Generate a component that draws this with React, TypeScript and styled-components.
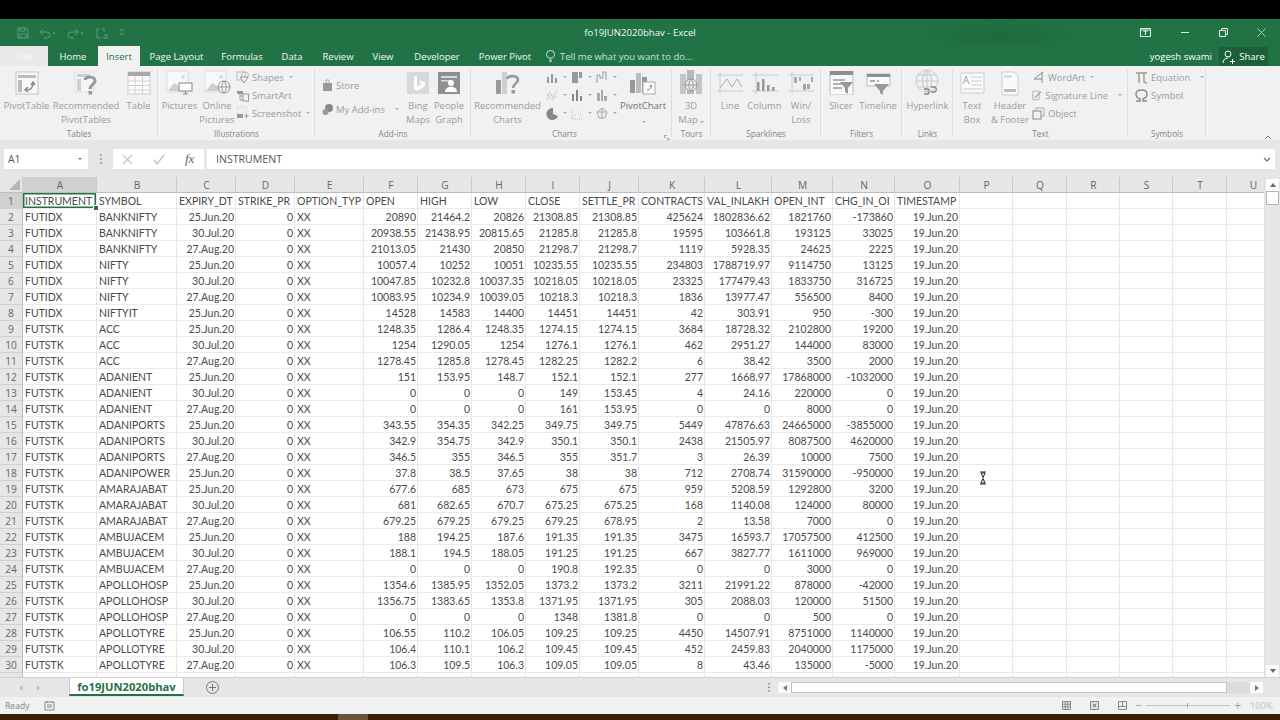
import React from "react";
import styled, { createGlobalStyle } from "styled-components";

const Global = createGlobalStyle`
  html, body { margin: 0; padding: 0; background: #000; }
  * { box-sizing: border-box; }
`;

const UI = `"Open Sans", "Noto Sans", sans-serif`;
const GREEN = "#217346";
const G = "#b9b9b9";
const D = "#9c9c9c";

const Frame = styled.div`
  width: 1280px; height: 720px; display: flex; flex-direction: column; overflow: hidden;
  position: relative; font-family: ${UI}; background: #000;
`;
const Letterbox = styled.div`height: 19px; background: #000; flex: none;`;
const TitleBar = styled.div`
  height: 27px; flex: none; display: grid; grid-template-columns: 1fr auto 1fr; align-items: center;
  background: radial-gradient(ellipse 90px 20px at 1000px 14px, #1d6a3f 0%, transparent 100%), ${GREEN};
  color: #fff; 
`;
const Qat = styled.div`display: flex; align-items: center; padding-left: 17px; gap: 10px;`;
const DocTitle = styled.div`font-size: 9.6px; color: #f2f7f4;`;
const WinControls = styled.div`display: flex; justify-content: flex-end; align-items: center; padding-right: 14px; gap: 29px;`;
const TabBar = styled.div`
  height: 20px; flex: none; display: flex; align-items: stretch; background: ${GREEN};
  font-size: 9.5px; color: #fff;
`;
const FileTab = styled.div`width: 48px; background: #e9e9e9; color: #fafafa; display: flex; align-items: center; justify-content: center;`;
const RibbonTab = styled.div<{ $w: number; $active?: boolean }>`
  width: ${p => p.$w}px; display: flex; align-items: center; justify-content: center; white-space: nowrap;
  background: ${p => (p.$active ? "#f1f1f1" : "transparent")};
  color: ${p => (p.$active ? GREEN : "#f3f8f5")};
`;
const Tell = styled.div`display: flex; align-items: center; gap: 5px; margin-left: 7px; color: #c9e0d3; white-space: nowrap;`;
const Account = styled.div`margin-left: auto; display: flex; align-items: center; padding-right: 12px; gap: 7px; white-space: nowrap;`;
const ShareBox = styled.div`width: 49px; height: 20px; background: #1b6039; display: flex; align-items: center; justify-content: center; gap: 3px; margin-top: 1px;`;

const Ribbon = styled.div`
  height: 74px; flex: none; background: #f1f1f1; display: flex; position: relative; font-size: 9.45px; color: ${D};
`;
const Group = styled.div<{ $w: number }>`
  width: ${p => p.$w}px; flex: none; display: flex; flex-direction: column; padding: 4px 0 0;
  position: relative;
  &::after { content: ""; position: absolute; right: 0; top: 3px; bottom: 3px; width: 1px; background: #dcdcdc; }
`;
const GroupBody = styled.div<{ $pl?: number }>`flex: 1; display: flex; align-items: flex-start; padding-left: ${p => p.$pl || 0}px; min-height: 0;`;
const GroupLabel = styled.div<{ $pr?: number }>`height: 12px; text-align: center; font-size: 8.2px; color: #858585; line-height: 12px; padding-right: ${p => p.$pr || 0}px;`;
const BigBtn = styled.div<{ $w: number; $dark?: boolean }>`
  width: ${p => p.$w}px; flex: none; display: flex; flex-direction: column; align-items: center; text-align: center;
  line-height: 13.5px; white-space: nowrap; color: ${p => (p.$dark ? "#6f6f6f" : D)};
`;
const IconSlot = styled.div`height: 26px; margin-bottom: 3px; display: flex; align-items: center; justify-content: center;`;
const SmallCol = styled.div<{ $w: number }>`
  width: ${p => p.$w}px; flex: none; display: flex; flex-direction: column; gap: 0; margin-top: -2px;
`;
const SmallRow = styled.div<{ $h?: number }>`height: ${p => p.$h || 18}px; display: flex; align-items: center; gap: 3px; white-space: nowrap;`;
const Caret = styled.span`
  display: inline-block; width: 0; height: 0; border-left: 2px solid transparent; border-right: 2px solid transparent;
  border-top: 2px solid #aaa; margin-left: 2px; flex: none;
`;
const ChartGrid = styled.div`
  display: grid; grid-template-columns: repeat(3, 25px); grid-auto-rows: 18px; width: 75px; flex: none; margin: -2px 0 0 5px;
`;
const ChartCell = styled.div`display: flex; align-items: center; gap: 2px;`;
const Collapse = styled.div`position: absolute; right: 6px; bottom: 2px; width: 10px; height: 8px;`;
const Launcher = styled.div`position: absolute; right: 2px; bottom: 3px; width: 6px; height: 6px;`;

const FormulaStrip = styled.div`
  height: 37px; flex: none; background: #e6e6e6; display: flex; align-items: flex-start; padding: 9px 5px 0 4px;
`;
const NameBox = styled.div`
  width: 84px; height: 20px; background: #fff; display: flex; align-items: center; justify-content: space-between;
  padding: 0 5px 0 4px; font: 10.4px ${UI}; color: #555; 
`;
const Dots = styled.div`width: 25px; flex: none; display: flex; justify-content: center; align-items: center; height: 20px;`;
const FxBox = styled.div`
  width: 91px; height: 20px; background: #fff; display: flex; align-items: center; gap: 20px; padding: 0 0 0 9px; flex: none;
`;
const Fx = styled.span`font: italic 13px "Liberation Serif", serif; color: #666;`;
const FormulaInput = styled.div`
  flex: 1; margin-left: 3px; height: 20px; background: #fff; display: flex; align-items: center; justify-content: space-between;
  padding: 0 4px 0 9px; font-size: 10.6px; color: #555;
`;

const SheetArea = styled.div`height: 500px; flex: none; display: flex; background: #fff; position: relative; margin-top: 0;`;
const Grid = styled.div`
  width: 1264px; height: 500px; overflow: hidden; display: grid;
  grid-template-columns: 23px 74px 80px 59px 59px 69px 54px 54px 54px 54px 59px 66px 67px 61px 62px 65px 53px 54px 53px 53px 54px 53px;
  grid-auto-rows: 16px; font-family: "Lato", sans-serif; font-size: 10.5px; color: #4a4a4a;
`;
const Corner = styled.div`background: #e6e6e6; border-right: 1px solid #cfcfcf; border-bottom: 1px solid #bdbdbd; display: flex; align-items: flex-end; justify-content: flex-end; padding: 2px;`;
const ColHead = styled.div<{ $on?: boolean }>`
  background: ${p => (p.$on ? "#d0d0d0" : "#e6e6e6")}; color: #666; border-right: 1px solid #c9c9c9; border-bottom: 1px solid #bdbdbd;
  display: flex; align-items: center; justify-content: center; font: 10.2px ${UI}; padding: 1px 0 0 1px;
`;
const RowHead = styled.div<{ $on?: boolean }>`
  background: ${p => (p.$on ? "#d0d0d0" : "#e6e6e6")}; color: #666; border-right: 1px solid #bdbdbd; border-bottom: 1px solid #d0d0d0;
  display: flex; align-items: center; justify-content: center; font: 10.2px ${UI}; padding-top: 1px;
`;
const Cell = styled.div<{ $right?: boolean; $sel?: boolean }>`
  border-right: 1px solid #e6e6e6; border-bottom: 1px solid #ebebeb; display: flex; align-items: center;
  justify-content: ${p => (p.$right ? "flex-end" : "flex-start")}; padding: 1px 1px 0 2px; white-space: nowrap; overflow: visible; position: relative;
  ${p => p.$sel ? `box-shadow: inset 0 0 0 1.5px ${GREEN}; z-index: 2;` : ""}
`;
const Handle = styled.span`position: absolute; right: -2px; bottom: -2px; width: 4px; height: 4px; background: ${GREEN}; border: 1px solid #fff; box-sizing: content-box; margin: -1px;`;
const VScroll = styled.div`width: 16px; flex: none; background: #e6e6e6; display: flex; flex-direction: column; align-items: center; padding: 2px 0 0; border-left: 1px solid #e0e0e0;`;
const ScrollBtn = styled.div`width: 13px; height: 12px; background: #fdfdfd; display: flex; align-items: center; justify-content: center; flex: none;`;
const VThumb = styled.div`width: 13px; height: 14px; background: #fff; border: 1px solid #b5b5b5; flex: none;`;
const Spring = styled.div`flex: 1;`;
const Cursor = styled.div`position: absolute; left: 979px; top: 291px; width: 8px; height: 14px;`;

const SheetBar = styled.div`
  height: 20px; flex: none; background: #e6e6e6; display: flex; align-items: flex-start; border-top: 1px solid #cfcfcf; position: relative;
`;
const NavArrows = styled.div`width: 69px; flex: none; height: 19px; display: flex; align-items: center; justify-content: center; gap: 14px; padding-right: 10px;`;
const SheetTab = styled.div`
  width: 115px; height: 18px; background: #fff; color: ${GREEN}; font: bold 11.2px ${UI}; display: flex; align-items: center; justify-content: center;
  border-bottom: 2px solid ${GREEN}; border-left: 1px solid #c8c8c8; border-right: 1px solid #c8c8c8;
`;
const AddSheet = styled.div`margin-left: 22px; height: 19px; display: flex; align-items: center;`;
const HScrollWrap = styled.div`margin-left: auto; display: flex; align-items: center; height: 19px; padding-right: 17px;`;
const HBtn = styled.div`width: 13px; height: 11px; display: flex; align-items: center; justify-content: center; background: #fafafa; flex: none;`;
const HThumb = styled.div`width: 436px; height: 11px; background: #fff; border: 1px solid #c4c4c4; flex: none;`;
const HTrack = styled.div`width: 23px; height: 11px; flex: none; background: #dcdcdc;`;

const StatusBar = styled.div`
  height: 17px; flex: none; background: #f1f1f1; display: flex; align-items: center; font-size: 8.6px; color: #848484; padding: 0 7px 0 5px;
`;
const StatusRight = styled.div`margin-left: auto; display: flex; align-items: center;`;
const ViewIcons = styled.div`display: flex; gap: 19px; margin-right: 8px;`;
const ZoomTrack = styled.div`width: 84px; height: 1px; background: #c4c4c4; margin: 0 4px; position: relative;
  &::after { content: ""; position: absolute; left: 41px; top: -2px; width: 1px; height: 5px; background: #aaa; }
`;
const ZoomBtn = styled.span`font-size: 12px; color: #999; line-height: 1;`;
const ZoomPct = styled.span`margin-left: 9px; color: #c2c2c2; font-size: 9px;`;
const Taskbar = styled.div`height: 6px; flex: none; background: #3a1f03; padding-left: 338px;`;
const TaskbarActive = styled.div`width: 30px; height: 6px; background: #6a543c;`;

const QI = ({ children, w = 12 }: { children: React.ReactNode; w?: number }) => (
  <svg width={w} height={12} viewBox={`0 0 ${w} 12`} fill="none" stroke="#5d9d7a" strokeWidth="1">{children}</svg>
);

const Ico = ({ w = 26, h = 26, children }: { w?: number; h?: number; children: React.ReactNode }) => (
  <svg width={w} height={h} viewBox={`0 0 ${w} ${h}`} fill="none" stroke={G} strokeWidth="1">{children}</svg>
);

const icons = {
  pivot: <Ico w={24} h={24}><rect x="1" y="1" width="22" height="22" fill="#f8f8f8" stroke="#c4c4c4" /><rect x="3" y="4" width="18" height="3" fill="#bbb" stroke="none" /><rect x="3" y="9" width="4" height="12" fill="#bbb" stroke="none" /><path d="M11 19c5 0 7-3 7-7M16 14l2-3 2 3M13 16l-3 3 3 2" stroke="#888" strokeWidth="1.4" /></Ico>,
  recPivot: <Ico w={24} h={24}><rect x="1" y="1" width="19" height="20" fill="#f5f5f5" stroke="#ddd" /><rect x="3" y="3" width="14" height="3" fill="#cfcfcf" stroke="none" /><rect x="3" y="8" width="4" height="12" fill="#cfcfcf" stroke="none" /><path d="M11 9c1-4 10-4 10 1 0 3-5 4-5 8" stroke="#999" strokeWidth="3" /><rect x="14.500" y="20" width="3.500" height="3.500" fill="#999" stroke="none" /></Ico>,
  table: <Ico w={24} h={24}><rect x="1" y="1" width="22" height="22" fill="#fbfbfb" stroke="#ccc" /><rect x="1" y="1" width="22" height="4" fill="#a8a8a8" stroke="none" /><path d="M1 10h22M1 14.500h22M1 19h22M8 5v18M15.500 5v18" stroke="#d2d2d2" /></Ico>,
  pictures: <Ico w={27} h={26}><rect x="1" y="1" width="21" height="21" fill="#f8f8f8" stroke="#ddd" /><path d="M2 21l6-8 5 3 2 5z" fill="#cfcfcf" stroke="none" /><circle cx="17" cy="7" r="2" fill="#ddd" stroke="none" /><rect x="13" y="13" width="13" height="8" fill="#fbfbfb" stroke="#888" /><path d="M19.500 21v3M17 24h5" stroke="#888" /></Ico>,
  online: <Ico w={27} h={26}><rect x="1" y="1" width="21" height="21" fill="#f8f8f8" stroke="#ddd" /><path d="M2 21l6-8 5 3 2 5z" fill="#cfcfcf" stroke="none" /><circle cx="17" cy="7" r="2" fill="#ddd" stroke="none" /><circle cx="20" cy="17" r="6" fill="#f8f8f8" stroke="#888" /><path d="M14 17h12M20 11c-3 4-3 8 0 12M20 11c3 4 3 8 0 12" stroke="#999" /></Ico>,
  store: <Ico w={11} h={13}><path d="M1 4h9v8H1z" fill="#999" stroke="none" /><path d="M4 4V1h3v3" stroke="#aaa" /></Ico>,
  addins: <Ico w={11} h={13}><circle cx="7" cy="5" r="4" fill="#888" stroke="none" /><circle cx="3.500" cy="9" r="3" fill="#9a9a9a" stroke="none" /></Ico>,
  bing: <Ico w={22} h={22}><rect width="22" height="22" fill="#d9d9d9" stroke="none" /><path d="M7 4l3 1v10l5-3-2-1-1-3 6 3v3l-8 5-3-2z" fill="#fff" stroke="none" /></Ico>,
  people: <Ico w={22} h={22}><rect width="22" height="22" fill="#8f8f8f" stroke="none" /><rect x="3" y="4" width="16" height="2" fill="#d8d8d8" stroke="none" /><rect x="3" y="8" width="9" height="1.500" fill="#d8d8d8" stroke="none" /><circle cx="13" cy="11" r="3" fill="#fff" stroke="none" /><path d="M7 20c0-7 12-7 12 0z" fill="#fff" stroke="none" /></Ico>,
  recCharts: <Ico w={24} h={26}><rect x="0" y="10" width="5" height="14" fill="#9a9a9a" stroke="none" /><rect x="6" y="2" width="5" height="22" fill="#cfcfcf" stroke="none" /><path d="M11 9c1-4 11-4 11 1 0 3-5 4-5 8" stroke="#999" strokeWidth="2.600" /><rect x="15.500" y="20" width="3.500" height="3.500" fill="#999" stroke="none" /></Ico>,
  pivotChart: <Ico w={26} h={26}><rect x="0" y="10" width="5" height="13" fill="#999" stroke="none" /><rect x="6" y="3" width="5" height="20" fill="#bbb" stroke="none" /><rect x="12" y="7" width="5" height="16" fill="#999" stroke="none" /><rect x="13" y="12" width="12" height="12" fill="#fafafa" stroke="#aaa" /><path d="M17 20c3 0 4-2 4-4M20 17l1-2 1 2" stroke="#888" /></Ico>,
  map3d: <Ico w={24} h={26}><rect x="1" y="4" width="6" height="20" fill="#c6c6c6" stroke="none" /><rect x="8" y="0" width="7" height="24" fill="#b8b8b8" stroke="none" /><rect x="17" y="4" width="6" height="20" fill="#c6c6c6" stroke="none" /><circle cx="12" cy="15" r="6" fill="#e9e9e9" stroke="#999" /><path d="M6 15h12M12 9c-3 4-3 8 0 12M12 9c3 4 3 8 0 12" stroke="#999" /></Ico>,
  line: <Ico w={26} h={24}><path d="M0 4h26M0 20h26M3 1v22" stroke="#ccc" /><path d="M3 17l7-9 5 8 5-8 5 8" stroke="#aaa" strokeWidth="1" /></Ico>,
  column: <Ico w={26} h={24}><path d="M0 4h26M0 20h26M4 1v22" stroke="#ccc" /><path d="M5 11h2.500v9H5zM10 8h2.500v12H10zM15 14h2.500v6H15zM20 16h2.500v4H20z" fill="#999" stroke="none" /></Ico>,
  winloss: <Ico w={26} h={24}><path d="M0 4h26M0 20h26M4 1v22" stroke="#ccc" /><path d="M6 6h3v6H6zM11 6h2v4h-2zM15 13h3v6h-3zM19 13h3v5h-3zM23 6h2v5h-2z" fill="#a8a8a8" stroke="none" /></Ico>,
  slicer: <Ico w={25} h={24}><rect x="1" y="0" width="23" height="24" fill="#fafafa" stroke="#bbb" /><rect x="1" y="0" width="23" height="4" fill="#8e8e8e" stroke="none" /><path d="M4 9h12M4 13h9M4 17h9" stroke="#999" strokeWidth="1.600" /><path d="M11 11h13l-5 6v6l-3-2v-4z" fill="#999" stroke="none" /></Ico>,
  timeline: <Ico w={25} h={24}><rect x="1" y="3" width="23" height="12" fill="#fafafa" stroke="#bbb" /><rect x="1" y="3" width="23" height="3" fill="#8e8e8e" stroke="none" /><path d="M4 10h5M11 10h2" stroke="#aaa" strokeWidth="2" /><path d="M8 13h15l-6 7v4l-3-2v-2z" fill="#999" stroke="none" /></Ico>,
  hyperlink: <Ico w={25} h={28}><circle cx="12" cy="12" r="11" stroke="#c8c8c8" /><path d="M1 12h22M12 1v22M12 1c-6 5-6 17 0 22M12 1c6 5 6 17 0 22M3 6h18M3 18h18" stroke="#c8c8c8" /><path d="M9 20h4a3 3 0 0 1 0 5H9M16 18h4a3 3 0 0 1 0 5h-4" stroke="#888" strokeWidth="1.400" /></Ico>,
  textbox: <Ico w={25} h={22}><rect x="1" y="1" width="23" height="20" fill="#fafafa" stroke="#ccc" /><path d="M3 12l3-8 3 8M4.500 9h3" stroke="#aaa" /><path d="M11 5h11M11 9h11M11 13h11M3 17h19" stroke="#ccc" /></Ico>,
  header: <Ico w={18} h={25}><path d="M1 1h12l4 4v19H1z" fill="#fafafa" stroke="#ccc" /><rect x="3" y="4" width="8" height="3" fill="#ddd" stroke="none" /><rect x="3" y="18" width="12" height="3" fill="#bbb" stroke="none" /></Ico>,
};

const small = {
  shapes: <Ico w={13} h={13}><rect x="1" y="1" width="8" height="8" stroke="#bbb" /><circle cx="9" cy="4.500" r="3.500" stroke="#bbb" /><path d="M4 6h8l-4 6z" fill="#f1f1f1" stroke="#999" /></Ico>,
  smartart: <Ico w={13} h={13}><path d="M1 2h6v3H1z" fill="#999" stroke="none" /><path d="M4 5v6M4 7h3M4 11h3" stroke="#999" /><rect x="7" y="5" width="5.500" height="7" stroke="#999" /></Ico>,
  screenshot: <Ico w={13} h={14}><rect x="1" y="1" width="9" height="7" stroke="#ccc" strokeDasharray="1 1" /><path d="M1 8h6v4H1z" fill="#999" stroke="none" /><path d="M8.500 10h4M10.500 8v4" stroke="#999" /></Ico>,
  wordart: <Ico w={13} h={13}><path d="M11 1L2 8h8M10 1v11" stroke="#888" /></Ico>,
  signature: <Ico w={13} h={13}><path d="M1 1h8v11H1z" stroke="#aaa" /><path d="M4 10l8-8-1-1-8 8z" fill="#999" stroke="none" /></Ico>,
  object: <Ico w={13} h={13}><rect x="1" y="4" width="8" height="8" stroke="#888" /><path d="M4 4V1h8v8H9" stroke="#aaa" /></Ico>,
  pi: <Ico w={13} h={13}><path d="M1 2h11M4 2v10M9 2v8c0 2 1 2 3 2" stroke="#999" strokeWidth="1.400" /></Ico>,
  omega: <Ico w={13} h={13}><path d="M1 12h4v-2C2 9 1 7 1 5c0-3 3-4 5.500-4S12 2 12 5c0 2-1 4-4 5v2h4" stroke="#888" strokeWidth="1.400" /></Ico>,
};

const MiniChart = ({ n }: { n: number }) => {
  const shapes: React.ReactNode[] = [
    <path d="M1 6h2v6H1zM5 3h2v9H5zM9 7h2v5H9z" fill="#999" stroke="none" />,
    <path d="M1 1h6v11H1zM8 1h3v6H8z" fill="#999" stroke="none" />,
    <path d="M1 12V4h3v3h3V1h3v8" stroke="#999" />,
    <path d="M1 11l3-8 3 6 4-8M1 5l5 6 5-4" stroke="#aaa" strokeDasharray="1 1" />,
    <path d="M1 5h2v7H1zM5 1h2v11H5zM9 7h2v5H9z" fill="#888" stroke="none" />,
    <path d="M1 4h3v8H1zM5 1h2v11H5zM8 7h3v5H8z" fill="#aaa" stroke="none" />,
    <path d="M7 1a6 6 0 1 0 5 8l-5-2z" fill="#888" stroke="none" />,
    <path d="M1 1v11h11M4 8h1M7 5h1M9 8h1" stroke="#bbb" strokeDasharray="1 1" />,
    <path d="M6 1l5 4-2 6H3L1 5zM6 1v11M1 5l10 0" stroke="#aaa" />,
  ];
  return <ChartCell><Ico w={13} h={13}>{shapes[n]}</Ico><Caret /></ChartCell>;
};

const raw = `FUTIDX|BANKNIFTY|25.Jun.20|20890 21464.2 20826 21308.85 21308.85 425624 1802836.62 1821760 -173860
FUTIDX|BANKNIFTY|30.Jul.20|20938.55 21438.95 20815.65 21285.8 21285.8 19595 103661.8 193125 33025
FUTIDX|BANKNIFTY|27.Aug.20|21013.05 21430 20850 21298.7 21298.7 1119 5928.35 24625 2225
FUTIDX|NIFTY|25.Jun.20|10057.4 10252 10051 10235.55 10235.55 234803 1788719.97 9114750 13125
FUTIDX|NIFTY|30.Jul.20|10047.85 10232.8 10037.35 10218.05 10218.05 23325 177479.43 1833750 316725
FUTIDX|NIFTY|27.Aug.20|10083.95 10234.9 10039.05 10218.3 10218.3 1836 13977.47 556500 8400
FUTIDX|NIFTYIT|25.Jun.20|14528 14583 14400 14451 14451 42 303.91 950 -300
FUTSTK|ACC|25.Jun.20|1248.35 1286.4 1248.35 1274.15 1274.15 3684 18728.32 2102800 19200
FUTSTK|ACC|30.Jul.20|1254 1290.05 1254 1276.1 1276.1 462 2951.27 144000 83000
FUTSTK|ACC|27.Aug.20|1278.45 1285.8 1278.45 1282.25 1282.2 6 38.42 3500 2000
FUTSTK|ADANIENT|25.Jun.20|151 153.95 148.7 152.1 152.1 277 1668.97 17868000 -1032000
FUTSTK|ADANIENT|30.Jul.20|0 0 0 149 153.45 4 24.16 220000 0
FUTSTK|ADANIENT|27.Aug.20|0 0 0 161 153.95 0 0 8000 0
FUTSTK|ADANIPORTS|25.Jun.20|343.55 354.35 342.25 349.75 349.75 5449 47876.63 24665000 -3855000
FUTSTK|ADANIPORTS|30.Jul.20|342.9 354.75 342.9 350.1 350.1 2438 21505.97 8087500 4620000
FUTSTK|ADANIPORTS|27.Aug.20|346.5 355 346.5 355 351.7 3 26.39 10000 7500
FUTSTK|ADANIPOWER|25.Jun.20|37.8 38.5 37.65 38 38 712 2708.74 31590000 -950000
FUTSTK|AMARAJABAT|25.Jun.20|677.6 685 673 675 675 959 5208.59 1292800 3200
FUTSTK|AMARAJABAT|30.Jul.20|681 682.65 670.7 675.25 675.25 168 1140.08 124000 80000
FUTSTK|AMARAJABAT|27.Aug.20|679.25 679.25 679.25 679.25 678.95 2 13.58 7000 0
FUTSTK|AMBUJACEM|25.Jun.20|188 194.25 187.6 191.35 191.35 3475 16593.7 17057500 412500
FUTSTK|AMBUJACEM|30.Jul.20|188.1 194.5 188.05 191.25 191.25 667 3827.77 1611000 969000
FUTSTK|AMBUJACEM|27.Aug.20|0 0 0 190.8 192.35 0 0 3000 0
FUTSTK|APOLLOHOSP|25.Jun.20|1354.6 1385.95 1352.05 1373.2 1373.2 3211 21991.22 878000 -42000
FUTSTK|APOLLOHOSP|30.Jul.20|1356.75 1383.65 1353.8 1371.95 1371.95 305 2088.03 120000 51500
FUTSTK|APOLLOHOSP|27.Aug.20|0 0 0 1348 1381.8 0 0 500 0
FUTSTK|APOLLOTYRE|25.Jun.20|106.55 110.2 106.05 109.25 109.25 4450 14507.91 8751000 1140000
FUTSTK|APOLLOTYRE|30.Jul.20|106.4 110.1 106.2 109.45 109.45 452 2459.83 2040000 1175000
FUTSTK|APOLLOTYRE|27.Aug.20|106.3 109.5 106.3 109.05 109.05 8 43.46 135000 -5000`;

const cols = "ABCDEFGHIJKLMNOPQRSTU".split("");
const heads = ["INSTRUMENT","SYMBOL","EXPIRY_DT","STRIKE_PR","OPTION_TYP","OPEN","HIGH","LOW","CLOSE","SETTLE_PR","CONTRACTS","VAL_INLAKH","OPEN_INT","CHG_IN_OI","TIMESTAMP"];
const rows = raw.split("\n").map(l => {
  const [a, b, c, rest] = l.split("|");
  return [a, b, c, "0", "XX", ...rest.split(" "), "19.Jun.20"];
});
const isRight = (i: number) => i === 2 || i === 3 || i >= 5;
const blanks = Array.from({ length: 6 });

const Big = ({ w, icon, a, b, dark }: { w: number; icon: React.ReactNode; a: string; b?: React.ReactNode; dark?: boolean }) => (
  <BigBtn $w={w} $dark={dark}><IconSlot>{icon}</IconSlot><span>{a}</span>{b && <span>{b}</span>}</BigBtn>
);

export default function App() {
  return (
    <Frame>
      <Global />
      <Letterbox />
      <TitleBar>
        <Qat>
          <QI><path d="M1 1h8l2 2v8H1zM3 1v3h5V1M3 11V7h6v4" /></QI>
          <QI w={18}><path d="M1 5h7a3 3 0 0 1 0 6H5M1 5l3-3M1 5l3 3M14 6l2 0 -1 1z" /></QI>
          <QI w={18}><path d="M11 5H4a3 3 0 0 0 0 6h3M11 5L8 2M11 5L8 8M14 6l2 0 -1 1z" /></QI>
          <QI w={14}><path d="M2 2h2M7 2h2v3M2 2v9h4M9 8h3v3H8" /></QI>
          <QI w={6}><path d="M1 3h4M1 6l2 2 2-2" /></QI>
        </Qat>
        <DocTitle>fo19JUN2020bhav - Excel</DocTitle>
        <WinControls>
          <svg width="11" height="9" viewBox="0 0 11 9" fill="none" stroke="#e8f1ec"><path d="M.5.5h10v8H.5zM5.500 7V3M3.500 4l2-2 2 2M.5 2h10" /></svg>
          <svg width="10" height="9" viewBox="0 0 10 9" stroke="#e8f1ec"><path d="M1 4.500h8" /></svg>
          <svg width="9" height="9" viewBox="0 0 9 9" fill="none" stroke="#e8f1ec"><path d="M.5 2.500h6v6h-6zM2.500 2.500V.5h6v6H6.500" /></svg>
          <svg width="9" height="9" viewBox="0 0 9 9" stroke="#a9cdb9"><path d="M.5.5l8 8M8.500.5l-8 8" /></svg>
        </WinControls>
      </TitleBar>
      <TabBar>
        <FileTab>File</FileTab>
        <RibbonTab $w={50}>Home</RibbonTab>
        <RibbonTab $w={42} $active>Insert</RibbonTab>
        <RibbonTab $w={73}>Page Layout</RibbonTab>
        <RibbonTab $w={58}>Formulas</RibbonTab>
        <RibbonTab $w={42}>Data</RibbonTab>
        <RibbonTab $w={50}>Review</RibbonTab>
        <RibbonTab $w={40}>View</RibbonTab>
        <RibbonTab $w={68}>Developer</RibbonTab>
        <RibbonTab $w={68}>Power Pivot</RibbonTab>
        <Tell>
          <svg width="9" height="12" viewBox="0 0 9 12" fill="none" stroke="#d5e6dc"><path d="M2.500 8C1 6.500.5 5.500.5 4.500a4 4 0 0 1 8 0c0 1-.5 2-2 3.500zM3 10h3M3.500 11.500h2" /></svg>
          Tell me what you want to do...
        </Tell>
        <Account>
          yogesh swami
          <ShareBox>
            <svg width="14" height="14" viewBox="0 0 14 14" fill="none" stroke="#fff"><circle cx="6" cy="4" r="3" /><path d="M1 13c0-3 2-5 5-5M8 11.500h5M10.500 9v5" /></svg>
            Share
          </ShareBox>
        </Account>
      </TabBar>
      <Ribbon>
        <Group $w={158}>
          <GroupBody $pl={2}>
            <Big w={49} icon={icons.pivot} a="PivotTable" />
            <Big w={70} icon={icons.recPivot} a="Recommended" b="PivotTables" />
            <Big w={35} icon={icons.table} a="Table" />
          </GroupBody>
          <GroupLabel>Tables</GroupLabel>
        </Group>
        <Group $w={157}>
          <GroupBody $pl={3}>
            <Big w={37} icon={icons.pictures} a="Pictures" />
            <Big w={38} icon={icons.online} a="Online" b="Pictures" />
            <SmallCol $w={78}>
              <SmallRow>{small.shapes}Shapes<Caret /></SmallRow>
              <SmallRow>{small.smartart}SmartArt</SmallRow>
              <SmallRow>{small.screenshot}Screenshot<Caret /></SmallRow>
            </SmallCol>
          </GroupBody>
          <GroupLabel>Illustrations</GroupLabel>
        </Group>
        <Group $w={156}>
          <GroupBody $pl={7}>
            <SmallCol $w={83}>
              <SmallRow $h={5} />
              <SmallRow $h={24}>{icons.store}Store</SmallRow>
              <SmallRow $h={24}>{icons.addins}My Add-ins &nbsp;<Caret /></SmallRow>
            </SmallCol>
            <Big w={26} icon={icons.bing} a="Bing" b="Maps" />
            <Big w={36} icon={icons.people} a="People" b="Graph" />
          </GroupBody>
          <GroupLabel>Add-ins</GroupLabel>
        </Group>
        <Group $w={201}>
          <GroupBody $pl={3}>
            <Big w={67} icon={icons.recCharts} a="Recommended" b="Charts" />
            <ChartGrid>{Array.from({ length: 9 }).map((_, i) => <MiniChart key={i} n={i} />)}</ChartGrid>
            <Big w={44} icon={icons.pivotChart} a="PivotChart" b={<Caret />} dark />
          </GroupBody>
          <GroupLabel $pr={14}>Charts</GroupLabel>
          <Launcher><svg width="6" height="6" viewBox="0 0 6 6" fill="none" stroke="#aaa"><path d="M.5 3V.5H3M2 2l3 3M5 3v2H3" /></svg></Launcher>
        </Group>
        <Group $w={39}>
          <GroupBody>
            <Big w={38} icon={icons.map3d} a="3D" b={<>Map<Caret /></>} />
          </GroupBody>
          <GroupLabel>Tours</GroupLabel>
        </Group>
        <Group $w={110}>
          <GroupBody $pl={3}>
            <Big w={32} icon={icons.line} a="Line" />
            <Big w={37} icon={icons.column} a="Column" />
            <Big w={36} icon={icons.winloss} a="Win/" b="Loss" />
          </GroupBody>
          <GroupLabel>Sparklines</GroupLabel>
        </Group>
        <Group $w={81}>
          <GroupBody $pl={4}>
            <Big w={32} icon={icons.slicer} a="Slicer" />
            <Big w={42} icon={icons.timeline} a="Timeline" />
          </GroupBody>
          <GroupLabel>Filters</GroupLabel>
        </Group>
        <Group $w={51}>
          <GroupBody $pl={3}>
            <Big w={45} icon={icons.hyperlink} a="Hyperlink" />
          </GroupBody>
          <GroupLabel>Links</GroupLabel>
        </Group>
        <Group $w={175}>
          <GroupBody $pl={3}>
            <Big w={32} icon={icons.textbox} a="Text" b="Box" />
            <Big w={44} icon={icons.header} a="Header" b="& Footer" />
            <SmallCol $w={90}>
              <SmallRow>{small.wordart}WordArt<Caret /></SmallRow>
              <SmallRow>{small.signature}Signature Line &nbsp;<Caret /></SmallRow>
              <SmallRow>{small.object}Object</SmallRow>
            </SmallCol>
          </GroupBody>
          <GroupLabel>Text</GroupLabel>
        </Group>
        <Group $w={78}>
          <GroupBody $pl={7}>
            <SmallCol $w={70}>
              <SmallRow>{small.pi}Equation &nbsp;<Caret /></SmallRow>
              <SmallRow>{small.omega}Symbol</SmallRow>
            </SmallCol>
          </GroupBody>
          <GroupLabel>Symbols</GroupLabel>
        </Group>
        <Collapse><svg width="8" height="6" viewBox="0 0 8 6" fill="none" stroke="#777"><path d="M1 5l3-3 3 3" /></svg></Collapse>
      </Ribbon>
      <FormulaStrip>
        <NameBox>A1<svg width="6" height="4" viewBox="0 0 6 4" fill="#777"><path d="M1 1h4L3 3z" /></svg></NameBox>
        <Dots><svg width="2" height="10" viewBox="0 0 2 10" fill="#aaa"><rect y="0" width="2" height="2" /><rect y="4" width="2" height="2" /><rect y="8" width="2" height="2" /></svg></Dots>
        <FxBox>
          <svg width="11" height="11" viewBox="0 0 11 11" stroke="#c5c5c5" strokeWidth="1.200"><path d="M1 1l9 9M10 1l-9 9" /></svg>
          <svg width="12" height="11" viewBox="0 0 12 11" fill="none" stroke="#c5c5c5" strokeWidth="1.400"><path d="M1 6l3 4 7-9" /></svg>
          <Fx>fx</Fx>
        </FxBox>
        <FormulaInput>INSTRUMENT<svg width="8" height="5" viewBox="0 0 8 5" fill="none" stroke="#777" strokeWidth="1.400"><path d="M1 1l3 3 3-3" /></svg></FormulaInput>
      </FormulaStrip>
      <SheetArea>
        <Grid>
          <Corner><svg width="11" height="11" viewBox="0 0 11 11"><path d="M11 0v11H0z" fill="#b5b5b5" /></svg></Corner>
          {cols.map((c, i) => <ColHead key={c} $on={i === 0}>{c}</ColHead>)}
          <RowHead $on>1</RowHead>
          {heads.map((h, i) => (
            <Cell key={h} $sel={i === 0}>{h}{i === 0 && <Handle />}</Cell>
          ))}
          {blanks.map((_, i) => <Cell key={i} />)}
          {rows.map((r, ri) => (
            <React.Fragment key={ri}>
              <RowHead>{ri + 2}</RowHead>
              {r.map((v, i) => <Cell key={i} $right={isRight(i)}>{v}</Cell>)}
              {blanks.map((_, i) => <Cell key={"b" + i} />)}
            </React.Fragment>
          ))}
          <RowHead />
          {cols.map(c => <Cell key={c} />)}
        </Grid>
        <VScroll>
          <ScrollBtn><svg width="6" height="4" viewBox="0 0 6 4" fill="#666"><path d="M3 0l3 4H0z" /></svg></ScrollBtn>
          <VThumb />
          <Spring />
          <ScrollBtn><svg width="6" height="4" viewBox="0 0 6 4" fill="#666"><path d="M3 4L0 0h6z" /></svg></ScrollBtn>
        </VScroll>
        <Cursor><svg width="8" height="14" viewBox="0 0 8 14" fill="#fff" stroke="#222"><path d="M1 1h6M1 13h6M2 2h4L4 6.500zM4 7.500L6 12H2z" /></svg></Cursor>
      </SheetArea>
      <SheetBar>
        <NavArrows>
          <svg width="4" height="6" viewBox="0 0 4 6" fill="#c4c4c4"><path d="M4 0v6L0 3z" /></svg>
          <svg width="4" height="6" viewBox="0 0 4 6" fill="#c4c4c4"><path d="M0 0v6l4-3z" /></svg>
        </NavArrows>
        <SheetTab>fo19JUN2020bhav</SheetTab>
        <AddSheet><svg width="13" height="13" viewBox="0 0 13 13" fill="none" stroke="#777"><circle cx="6.500" cy="6.500" r="6" /><path d="M6.500 3v7M3 6.500h7" /></svg></AddSheet>
        <HScrollWrap>
          <svg width="2" height="9" viewBox="0 0 2 9" fill="#999" style={{ marginRight: 8 }}><rect width="2" height="1.500" /><rect y="3.500" width="2" height="1.500" /><rect y="7" width="2" height="1.500" /></svg>
          <HBtn><svg width="4" height="6" viewBox="0 0 4 6" fill="#777"><path d="M4 0v6L0 3z" /></svg></HBtn>
          <HThumb />
          <HTrack />
          <HBtn><svg width="4" height="6" viewBox="0 0 4 6" fill="#777"><path d="M0 0v6l4-3z" /></svg></HBtn>
        </HScrollWrap>
      </SheetBar>
      <StatusBar>
        Ready
        <svg width="11" height="11" viewBox="0 0 11 11" fill="none" stroke="#888" style={{ marginLeft: 15 }}><path d="M1 2h9v8H1zM3 1v2M8 1v2M3 5h5M3 7h5" /></svg>
        <StatusRight>
          <ViewIcons>
            <svg width="9" height="9" viewBox="0 0 9 9" fill="none" stroke="#8a8a8a"><path d="M.5.5h8v8h-8zM.5 3.200h8M.5 5.800h8M3.200.5v8M5.800.5v8" /></svg>
            <svg width="9" height="9" viewBox="0 0 9 9" fill="#ddd" stroke="#8a8a8a"><path d="M.5.5h8v8h-8z" /><rect x="3" y="3" width="3" height="3" fill="#999" stroke="none" /></svg>
            <svg width="9" height="9" viewBox="0 0 9 9" fill="none" stroke="#8a8a8a"><path d="M.5.5h8v8h-8zM4.500.5v5M.5 5.500h8" /></svg>
          </ViewIcons>
          <ZoomBtn>−</ZoomBtn>
          <ZoomTrack />
          <ZoomBtn>+</ZoomBtn>
          <ZoomPct>100%</ZoomPct>
        </StatusRight>
      </StatusBar>
      <Taskbar><TaskbarActive /></Taskbar>
    </Frame>
  );
}
